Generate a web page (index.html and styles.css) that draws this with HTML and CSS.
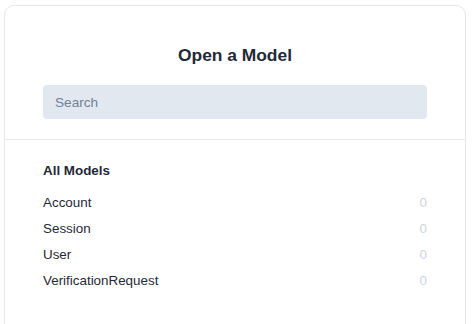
FILE: index.html
```html
<!DOCTYPE html>
<html>
<head>
<meta charset="utf-8">
<link rel="stylesheet" href="styles.css">
</head>
<body>
<div class="card">
  <div class="header">
    <h1 class="title">Open a Model</h1>
    <div class="search">Search</div>
  </div>
  <div class="body">
    <h2 class="heading">All Models</h2>
    <ul class="list">
      <li class="row"><span>Account</span><span class="count">0</span></li>
      <li class="row"><span>Session</span><span class="count">0</span></li>
      <li class="row"><span>User</span><span class="count">0</span></li>
      <li class="row"><span>VerificationRequest</span><span class="count">0</span></li>
    </ul>
  </div>
</div>
</body>
</html>
```
FILE: styles.css
```css
html, body {
  margin: 0;
  padding: 0;
  background: #ffffff;
  overflow: hidden;
}
body {
  font-family: "Liberation Sans", Arial, sans-serif;
  color: #1f2937;
  padding: 5px 0 0 4px;
}
.card {
  width: 462px;
  height: 340px;
  box-sizing: border-box;
  border: 1px solid #e5e7eb;
  border-radius: 10px;
  background: #fff;
}
.header {
  padding: 37px 38px 20px;
  border-bottom: 1px solid #e5e7eb;
  display: flex;
  flex-direction: column;
  gap: 18px;
}
.title {
  margin: 0;
  font-size: 17.4px;
  line-height: 24px;
  font-weight: 700;
  text-align: center;
  color: #1f2937;
}
.search {
  height: 34px;
  background: #e2e8f0;
  border-radius: 4px;
  padding: 0 12px;
  display: flex;
  align-items: center;
  font-size: 13.6px;
  color: #718096;
}
.body {
  padding: 21px 38px 0;
}
.heading {
  margin: 0 0 9px;
  font-size: 13.4px;
  line-height: 20px;
  font-weight: 700;
  color: #1f2937;
}
.list {
  list-style: none;
  margin: 0;
  padding: 0;
}
.row {
  display: flex;
  justify-content: space-between;
  font-size: 13.4px;
  line-height: 26px;
  color: #1f2937;
}
.count {
  color: #cbd5e1;
}
```
